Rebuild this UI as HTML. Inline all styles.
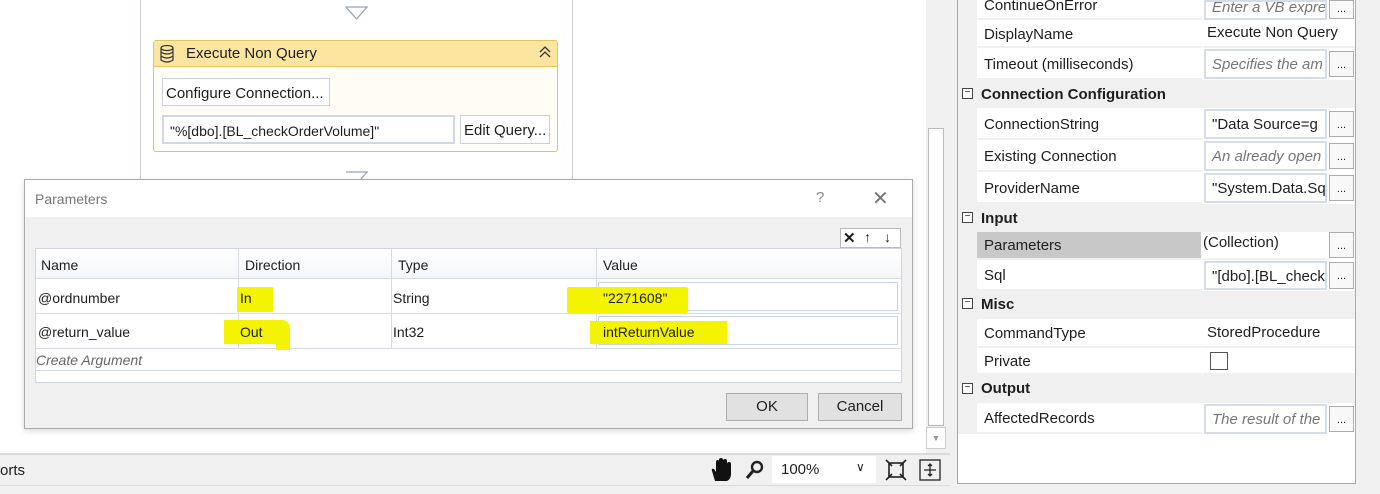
<!DOCTYPE html>
<html><head><meta charset="utf-8"><style>
*{margin:0;padding:0;box-sizing:border-box}
body{width:1380px;height:494px;position:relative;overflow:hidden;background:#f0f0f0;font-family:"Liberation Sans",sans-serif;font-size:14px;color:#1e1e1e}
.a{position:absolute}
.t{position:absolute;white-space:nowrap}
.hl{position:absolute;background:#f4f400}
.btn{position:absolute;background:#e1e1e1;border:1px solid #adadad;text-align:center}
.nm{position:absolute;left:977px;width:225px;background:#fff;border-bottom:2px solid #f0f0f0;padding-left:7px;font-size:15px}
.vl{position:absolute;left:1203px;width:124px;background:#fff;border-bottom:2px solid #f0f0f0;overflow:hidden;white-space:nowrap;font-size:15px}
.ed{position:absolute;left:1204px;width:123px;border:2px solid #d6dde8;background:#fff;overflow:hidden;white-space:nowrap;padding-left:6px;font-size:15px}
.it{font-style:italic;color:#777}
.dot{position:absolute;left:1329px;width:25px;border:1px solid #adadad;background:#f8f8f8;text-align:center;font-size:11px}
.hd{position:absolute;left:958px;width:397px;background:#f0f0f0;font-weight:bold;font-size:15px;padding-left:23px}
.bx{position:absolute;left:962px;width:11px;height:11px;border:1px solid #444;background:#fff;font-size:10px;line-height:8px;text-align:center}
</style></head><body>
<div class="a" style="left:0;top:0;width:926px;height:454px;background:#fff"></div>
<div class="a" style="left:140px;top:0;width:1px;height:180px;background:#c8cdd8"></div>
<div class="a" style="left:572px;top:0;width:1px;height:180px;background:#c8cdd8"></div>
<svg class="a" style="left:345px;top:6px" width="24" height="14"><path d="M1 1 L22 1 L11.5 13 Z" fill="none" stroke="#9aa3b5" stroke-width="1.3"/></svg>
<svg class="a" style="left:345px;top:171px" width="24" height="10"><path d="M1 1 L22 1 L16 8" fill="none" stroke="#9aa3b5" stroke-width="1.3"/></svg>
<div class="a" style="left:153px;top:40px;width:405px;height:112px;border:1px solid #e6c45c;border-radius:3px;background:#fffdf6"></div>
<div class="a" style="left:154px;top:41px;width:403px;height:26px;background:#fce5a0;border-bottom:1px solid #e6c45c"></div>
<svg class="a" style="left:158px;top:44px" width="18" height="20"><g fill="none" stroke="#333" stroke-width="1.2"><ellipse cx="9" cy="4" rx="6" ry="2.5"/><path d="M3 4 V16 Q9 20 15 16 V4 M3 8 Q9 12 15 8 M3 12 Q9 16 15 12"/></g></svg>
<div class="t" style="left:186px;top:45px;font-size:15px">Execute Non Query</div>
<svg class="a" style="left:538px;top:45px" width="14" height="14"><path d="M2 7 L7 2 L12 7 M2 12 L7 7 L12 12" fill="none" stroke="#333" stroke-width="1.3"/></svg>
<div class="a" style="left:162px;top:78px;width:168px;height:28px;border:1px solid #c8d0dc;background:#fff"></div>
<div class="t" style="left:166px;top:85px;font-size:15px">Configure Connection...</div>
<div class="a" style="left:162px;top:115px;width:293px;height:29px;border:2px solid #d0d8e4;background:#fff"></div>
<div class="t" style="left:170px;top:123px;font-size:14px">"%[dbo].[BL_checkOrderVolume]"</div>
<div class="a" style="left:460px;top:115px;width:90px;height:29px;border:1px solid #c8d0dc;background:#fff"></div>
<div class="t" style="left:464px;top:122px;font-size:15px">Edit Query...</div>
<div class="a" style="left:926px;top:0;width:20px;height:454px;background:#f0f0f0"></div>
<div class="a" style="left:928px;top:128px;width:16px;height:298px;border:1px solid #bbb;background:#fff"></div>
<div class="a" style="left:926px;top:427px;width:20px;height:22px;border:1px solid #ccc;background:#fff;color:#999;font-size:9px;text-align:center;line-height:20px">▼</div>
<div class="a" style="left:0;top:453px;width:950px;height:33px;background:#f0f0f0;border-top:2px solid #dadada;border-bottom:1px solid #dadada"></div>
<div class="t" style="left:0;top:462px;font-size:15px">orts</div>
<svg class="a" style="left:709px;top:457px" width="24" height="26"><path d="M6 24 L3 14 Q2 11 5 12 L7 15 V5 Q7 3 9 3 Q10 3 10 5 V12 V3 Q10 1 12 1 Q14 1 14 3 V12 V4 Q14 2 16 2 Q18 2 18 4 V13 V7 Q18 5 20 5 Q22 5 22 7 V17 Q22 22 18 24 Z" fill="#111"/></svg>
<svg class="a" style="left:744px;top:459px" width="22" height="22"><circle cx="13" cy="8" r="5" fill="none" stroke="#222" stroke-width="2.4"/><path d="M9 12 L3 19" stroke="#222" stroke-width="3"/></svg>
<div class="a" style="left:772px;top:456px;width:104px;height:27px;background:#fff"></div>
<div class="t" style="left:781px;top:461px;font-size:15px">100%</div>
<div class="t" style="left:856px;top:460px;font-size:12px">∨</div>
<svg class="a" style="left:884px;top:458px" width="24" height="24"><g stroke="#222" stroke-width="1.6" fill="none"><rect x="5" y="5" width="14" height="14"/><path d="M2 2 L8 8 M22 2 L16 8 M2 22 L8 16 M22 22 L16 16"/></g></svg>
<svg class="a" style="left:918px;top:458px" width="24" height="24"><g stroke="#222" stroke-width="1.3" fill="none"><rect x="2" y="2" width="20" height="20"/><path d="M12 6 V18 M6 12 H18 M10 8 L12 6 L14 8 M10 16 L12 18 L14 16"/></g></svg>
<div class="a" style="left:24px;top:179px;width:889px;height:250px;border:1px solid #aaa;background:#f0f0f0;box-shadow:0 2px 6px rgba(0,0,0,.15)"></div>
<div class="a" style="left:25px;top:180px;width:887px;height:37px;background:#fff"></div>
<div class="t" style="left:35px;top:191px;font-size:14px;color:#777">Parameters</div>
<div class="t" style="left:816px;top:189px;font-size:15px;color:#888">?</div>
<div class="t" style="left:872px;top:186px;font-size:20px;color:#777">✕</div>
<div class="a" style="left:840px;top:228px;width:61px;height:20px;border:1px solid #bbb;background:#fff"></div>
<div class="t" style="left:843px;top:229px;font-size:15px;font-weight:bold">✕</div>
<div class="t" style="left:864px;top:229px;font-size:14px;font-weight:bold">↑</div>
<div class="t" style="left:884px;top:229px;font-size:14px;font-weight:bold">↓</div>
<div class="a" style="left:35px;top:248px;width:867px;height:135px;border:1px solid #d0d4dc;background:#fff"></div>
<div class="a" style="left:36px;top:249px;width:865px;height:30px;background:linear-gradient(#fff,#f4f6f8);border-bottom:1px solid #d8dce2"></div>
<div class="a" style="left:238px;top:249px;width:1px;height:99px;background:#d8dce2"></div>
<div class="a" style="left:391px;top:249px;width:1px;height:99px;background:#d8dce2"></div>
<div class="a" style="left:596px;top:249px;width:1px;height:99px;background:#d8dce2"></div>
<div class="a" style="left:36px;top:313px;width:865px;height:1px;background:#d8dce2"></div>
<div class="a" style="left:36px;top:348px;width:865px;height:1px;background:#d8dce2"></div>
<div class="a" style="left:36px;top:370px;width:865px;height:1px;background:#d8dce2"></div>
<div class="a" style="left:598px;top:282px;width:300px;height:29px;border:1px solid #c8d4e4"></div>
<div class="a" style="left:598px;top:316px;width:300px;height:29px;border:1px solid #c8d4e4"></div>
<div class="hl" style="left:237px;top:287px;width:36px;height:25px"></div>
<div class="hl" style="left:567px;top:287px;width:121px;height:26px;border-radius:2px"></div>
<div class="hl" style="left:224px;top:320px;width:66px;height:24px;border-radius:0 8px 0 0"></div>
<div class="hl" style="left:276px;top:330px;width:14px;height:20px"></div>
<div class="hl" style="left:590px;top:321px;width:137px;height:23px"></div>
<div class="t" style="left:41px;top:257px">Name</div>
<div class="t" style="left:245px;top:257px">Direction</div>
<div class="t" style="left:398px;top:257px">Type</div>
<div class="t" style="left:603px;top:257px">Value</div>
<div class="t" style="left:38px;top:290px">@ordnumber</div>
<div class="t" style="left:240px;top:290px">In</div>
<div class="t" style="left:393px;top:290px">String</div>
<div class="t" style="left:603px;top:290px">"2271608"</div>
<div class="t" style="left:38px;top:324px">@return_value</div>
<div class="t" style="left:240px;top:324px">Out</div>
<div class="t" style="left:393px;top:324px">Int32</div>
<div class="t" style="left:603px;top:324px">intReturnValue</div>
<div class="t" style="left:36px;top:352px;font-style:italic;color:#666">Create Argument</div>
<div class="btn" style="left:726px;top:393px;width:82px;height:28px;line-height:26px;font-size:15px">OK</div>
<div class="btn" style="left:818px;top:393px;width:84px;height:28px;line-height:26px;font-size:15px">Cancel</div>
<div class="a" style="left:957px;top:0;width:399px;height:484px;border:1px solid #aaa;border-top:none;background:#fff"></div>
<div class="a" style="left:958px;top:0;width:19px;height:434px;background:#f0f0f0"></div>
<div class="nm" style="top:0;height:20px;line-height:12px">ContinueOnError</div>
<div class="ed it" style="top:0;height:20px;line-height:12px">Enter a VB expre</div><div class="dot" style="top:0;height:19px;line-height:16px">...</div>
<div class="nm" style="top:20px;height:28px;line-height:30px">DisplayName</div>
<div class="vl" style="top:20px;height:28px;line-height:26px;padding-left:4px;width:152px">Execute Non Query</div>
<div class="nm" style="top:48px;height:32px;line-height:34px">Timeout (milliseconds)</div>
<div class="ed it" style="top:49px;height:30px;line-height:28px">Specifies the am</div><div class="dot" style="top:51px;height:26px;line-height:26px">...</div>
<div class="hd" style="top:80px;height:28px;line-height:30px">Connection Configuration</div><div class="bx" style="top:88px">−</div>
<div class="nm" style="top:108px;height:32px;line-height:34px">ConnectionString</div>
<div class="ed" style="top:109px;height:30px;line-height:28px">"Data Source=g</div><div class="dot" style="top:111px;height:26px;line-height:26px">...</div>
<div class="nm" style="top:140px;height:32px;line-height:34px">Existing Connection</div>
<div class="ed it" style="top:141px;height:30px;line-height:28px">An already open</div><div class="dot" style="top:143px;height:26px;line-height:26px">...</div>
<div class="nm" style="top:172px;height:32px;line-height:34px">ProviderName</div>
<div class="ed" style="top:173px;height:30px;line-height:28px">"System.Data.Sq</div><div class="dot" style="top:175px;height:26px;line-height:26px">...</div>
<div class="hd" style="top:204px;height:28px;line-height:30px">Input</div><div class="bx" style="top:212px">−</div>
<div class="nm" style="top:232px;height:28px;line-height:28px;background:#c8c8c8;width:224px">Parameters</div>
<div class="vl" style="top:232px;height:28px;line-height:22px">(Collection)</div><div class="dot" style="top:232px;height:26px;line-height:26px">...</div>
<div class="nm" style="top:260px;height:31px;line-height:32px">Sql</div>
<div class="ed" style="top:261px;height:29px;line-height:27px">"[dbo].[BL_check</div><div class="dot" style="top:262px;height:27px;line-height:26px">...</div>
<div class="hd" style="top:291px;height:28px;line-height:28px">Misc</div><div class="bx" style="top:298px">−</div>
<div class="nm" style="top:319px;height:29px;line-height:29px">CommandType</div>
<div class="vl" style="top:319px;height:29px;line-height:28px;padding-left:4px;width:152px">StoredProcedure</div>
<div class="nm" style="top:348px;height:27px;line-height:28px">Private</div>
<div class="vl" style="top:348px;height:27px;width:152px"><div class="a" style="left:7px;top:4px;width:18px;height:18px;border:1px solid #555"></div></div>
<div class="hd" style="top:375px;height:28px;line-height:28px">Output</div><div class="bx" style="top:383px">−</div>
<div class="nm" style="top:403px;height:31px;line-height:32px">AffectedRecords</div>
<div class="ed it" style="top:404px;height:30px;line-height:28px">The result of the</div><div class="dot" style="top:406px;height:26px;line-height:26px">...</div>
</body></html>
